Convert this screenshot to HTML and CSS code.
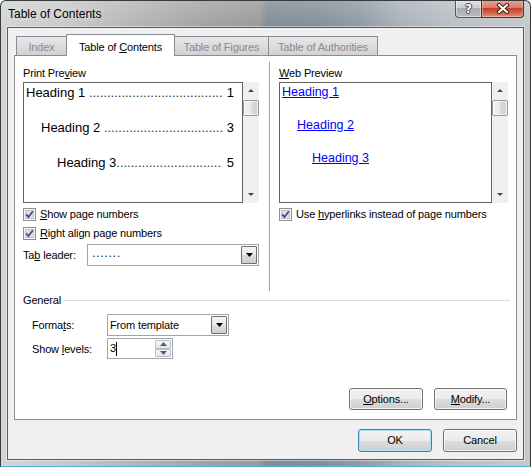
FILE: index.html
```html
<!DOCTYPE html>
<html>
<head>
<meta charset="utf-8">
<title>Table of Contents</title>
<link rel="stylesheet" href="styles.css">
</head>
<body>
<div class="window">
  <div class="titlebar">
    <div class="title">Table of Contents</div>
    <div class="caption">
      <div class="cap-btn cap-help"><span class="help-glyph">?</span></div>
      <div class="cap-btn cap-close">
        <svg width="14" height="11" viewBox="0 0 14 11">
          <path d="M3 2 L11 9 M11 2 L3 9" stroke="#4a1c14" stroke-width="4.2" stroke-linecap="round"/>
          <path d="M3 2 L11 9 M11 2 L3 9" stroke="#ffffff" stroke-width="2.2" stroke-linecap="round"/>
        </svg>
      </div>
    </div>
  </div>
  <div class="client">
    <div class="tabs">
      <div class="tab tab-index"><span>Index</span></div>
      <div class="tab tab-active"><span>Table of <u>C</u>ontents</span></div>
      <div class="tab tab-figures"><span>Table of Figures</span></div>
      <div class="tab tab-auth"><span>Table of Authorities</span></div>
    </div>
    <div class="panel">
      <div class="columns">
        <div class="col col-left">
          <div class="lbl">Print Pre<u>v</u>iew</div>
          <div class="preview-row">
            <div class="pbox pbox-print">
              <div class="toc-line"><span class="toc-name">Heading 1 <span class="toc-dots">.....................................</span></span><span class="toc-num">1</span></div>
              <div class="toc-line toc-l2"><span class="toc-name">Heading 2 <span class="toc-dots">.................................</span></span><span class="toc-num">3</span></div>
              <div class="toc-line toc-l3"><span class="toc-name">Heading 3<span class="toc-dots">.............................</span></span><span class="toc-num">5</span></div>
            </div>
            <div class="vscroll">
              <div class="sb-arrow"><span class="tri-up"></span></div>
              <div class="sb-thumb"></div>
              <div class="sb-fill"></div>
              <div class="sb-arrow"><span class="tri-down"></span></div>
            </div>
          </div>
          <div class="check check-first">
            <svg class="cb" width="13" height="13" viewBox="0 0 13 13"><rect x="0.5" y="0.5" width="12" height="12" fill="#f6f6f6" stroke="#8e8f8f"/><rect x="2.5" y="2.5" width="8" height="8" fill="#dfe1e4" stroke="#c3c6cb"/><path d="M3.2 6.4 L5.4 9 L9.9 3.3" fill="none" stroke="#41538a" stroke-width="1.8"/></svg>
            <span><u>S</u>how page numbers</span>
          </div>
          <div class="check check-next">
            <svg class="cb" width="13" height="13" viewBox="0 0 13 13"><rect x="0.5" y="0.5" width="12" height="12" fill="#f6f6f6" stroke="#8e8f8f"/><rect x="2.5" y="2.5" width="8" height="8" fill="#dfe1e4" stroke="#c3c6cb"/><path d="M3.2 6.4 L5.4 9 L9.9 3.3" fill="none" stroke="#41538a" stroke-width="1.8"/></svg>
            <span><u>R</u>ight align page numbers</span>
          </div>
          <div class="leader-row">
            <span class="leader-lbl">Ta<u>b</u> leader:</span>
            <div class="combo combo-leader">
              <span class="combo-text leader-dots">.......</span>
              <div class="combo-btn"><svg width="7" height="4" viewBox="0 0 7 4"><path d="M0 0 H7 L3.5 4 Z" fill="#000"/></svg></div>
            </div>
          </div>
        </div>
        <div class="vsep"></div>
        <div class="col col-right">
          <div class="lbl"><u>W</u>eb Preview</div>
          <div class="preview-row">
            <div class="pbox pbox-web">
              <div class="web-line"><span class="link">Heading 1</span></div>
              <div class="web-line web-l2"><span class="link">Heading 2</span></div>
              <div class="web-line web-l3"><span class="link">Heading 3</span></div>
            </div>
            <div class="vscroll">
              <div class="sb-arrow"><span class="tri-up"></span></div>
              <div class="sb-thumb"></div>
              <div class="sb-fill"></div>
              <div class="sb-arrow"><span class="tri-down"></span></div>
            </div>
          </div>
          <div class="check check-first">
            <svg class="cb" width="13" height="13" viewBox="0 0 13 13"><rect x="0.5" y="0.5" width="12" height="12" fill="#f6f6f6" stroke="#8e8f8f"/><rect x="2.5" y="2.5" width="8" height="8" fill="#dfe1e4" stroke="#c3c6cb"/><path d="M3.2 6.4 L5.4 9 L9.9 3.3" fill="none" stroke="#41538a" stroke-width="1.8"/></svg>
            <span>Use <u>h</u>yperlinks instead of page numbers</span>
          </div>
        </div>
      </div>
      <div class="gen-head">
        <span>General</span>
        <div class="gen-line"></div>
      </div>
      <div class="form-row form-first">
        <span class="form-lbl">Forma<u>t</u>s:</span>
        <div class="combo combo-formats">
          <span class="combo-text">From template</span>
          <div class="combo-btn"><svg width="7" height="4" viewBox="0 0 7 4"><path d="M0 0 H7 L3.5 4 Z" fill="#000"/></svg></div>
        </div>
      </div>
      <div class="form-row form-next">
        <span class="form-lbl">Show <u>l</u>evels:</span>
        <div class="spin">
          <span class="spin-text">3</span><span class="caret"></span>
          <div class="spin-btns">
            <div class="spin-btn"><svg width="7" height="4" viewBox="0 0 7 4"><path d="M0 4 H7 L3.5 0 Z" fill="#4c6283"/></svg></div>
            <div class="spin-btn"><svg width="7" height="4" viewBox="0 0 7 4"><path d="M0 0 H7 L3.5 4 Z" fill="#4c6283"/></svg></div>
          </div>
        </div>
      </div>
      <div class="panel-btns">
        <div class="btn btn-small btn-options"><span><u>O</u>ptions...</span></div>
        <div class="btn btn-small btn-modify"><span><u>M</u>odify...</span></div>
      </div>
    </div>
    <div class="dlg-btns">
      <div class="btn btn-default"><span>OK</span></div>
      <div class="btn"><span>Cancel</span></div>
    </div>
  </div>
</div>
</body>
</html>
```
FILE: styles.css
```css
html, body {
  margin: 0;
  padding: 0;
  background: #ffffff;
}

body {
  font-family: "Liberation Sans", Arial, sans-serif;
  font-size: 11px;
  letter-spacing: -0.15px;
  color: #000;
}

.window {
  width: 531px;
  height: 467px;
  box-sizing: border-box;
  border: 1px solid #3a3a3a;
  border-bottom-color: #52b6d6;
  border-radius: 6px 6px 0 0;
  overflow: hidden;
  display: flex;
  flex-direction: column;
  background:
    linear-gradient(to bottom, rgba(255,255,255,0.18) 0px, rgba(255,255,255,0) 26px),
    linear-gradient(to right, #d3d4d5 0px, #c6c7c7 70px, #b2b3b3 140px, #a1a2a0 210px, #9a9b99 258px, #808c96 266px, #83909a 320px, #909ba4 360px, #a9b1b9 400px, #b9bfc6 450px, #c4c9ce 531px);
}

.titlebar {
  height: 26px;
  display: flex;
  align-items: flex-start;
  padding: 0 6px 0 7px;
  flex: none;
}

.title {
  flex: 1;
  line-height: 26px;
  font-size: 12px;
  letter-spacing: 0;
  color: #000;
  text-shadow: 0 0 6px rgba(255,255,255,0.7);
}

.caption {
  display: flex;
  height: 18px;
  margin-top: -1px;
}

.cap-btn {
  box-sizing: border-box;
  height: 18px;
  display: flex;
  align-items: center;
  justify-content: center;
  border: 1px solid #54585e;
  border-top: none;
}

.cap-help {
  width: 26px;
  border-radius: 0 0 0 4px;
  border-right: none;
  background: linear-gradient(to bottom, #e6e8ea 0%, #c9ccd0 45%, #a9adb3 50%, #b9bdc2 100%);
  box-shadow: inset 0 0 0 1px rgba(255,255,255,0.45);
}

.help-glyph {
  font-family: "DejaVu Sans", sans-serif;
  font-weight: bold;
  font-size: 12px;
  line-height: 16px;
  color: #fff;
  text-shadow: 1px 0 0 #444, -1px 0 0 #444, 0 1px 0 #444, 0 -1px 0 #444;
}

.cap-close {
  width: 43px;
  border-radius: 0 0 4px 0;
  border-color: #5d2a22;
  background: linear-gradient(to bottom, #e9a897 0%, #d97a66 45%, #c43f29 50%, #d3735b 85%, #e0a080 100%);
  box-shadow: inset 0 0 0 1px rgba(255,220,210,0.4);
}

.client {
  flex: 1;
  margin: 0 6px 6px 6px;
  border: 1px solid #5a5a5a;
  box-shadow: 0 0 0 1px rgba(255,255,255,0.45);
  background: #f0f0f0;
  padding: 6px 6px 0 6px;
  display: flex;
  flex-direction: column;
}

.tabs {
  display: flex;
  align-items: flex-end;
  height: 22px;
  margin-bottom: -1px;
  padding-left: 2px;
  position: relative;
  z-index: 1;
}

.tab {
  box-sizing: border-box;
  height: 19px;
  margin-bottom: 1px;
  border: 1px solid #898c95;
  border-bottom: none;
  margin-right: -1px;
  background: linear-gradient(to bottom, #e8e8e8 0%, #dcdcdc 50%, #d2d2d2 100%);
  color: #8a8a8a;
  display: flex;
  align-items: center;
  justify-content: center;
  line-height: 13px;
  padding-top: 3px;
  white-space: nowrap;
}

.tab-index { width: 51px; }
.tab-figures { width: 95px; }
.tab-auth { width: 110px; }

.tab-active {
  width: 109px;
  height: 22px;
  margin-bottom: 0;
  background: #ffffff;
  color: #000;
  position: relative;
  z-index: 2;
  padding-top: 3px;
}

.panel {
  box-sizing: border-box;
  height: 365px;
  border: 1px solid #898c95;
  background: #ffffff;
  display: flex;
  flex-direction: column;
}

.columns {
  display: flex;
  padding: 6px 7px 0 8px;
}

.col-left { width: 236px; }
.col-right { width: 229px; }

.vsep {
  width: 1px;
  height: 229px;
  background: #a0a0a0;
  margin: 0 9px 0 10px;
}

.lbl {
  margin-top: 5px;
  line-height: 13px;
  height: 13px;
  margin-bottom: 2px;
}

.preview-row {
  display: flex;
  height: 121px;
}

.pbox {
  box-sizing: border-box;
  border: 1px solid #646464;
  background: #fff;
  overflow: hidden;
}

.pbox-print {
  width: 220px;
  padding: 2px 8px 0 2px;
  font-size: 13px;
  letter-spacing: 0;
}

.pbox-web {
  width: 213px;
  padding: 1px 4px 0 2px;
  font-size: 12.5px;
  letter-spacing: 0;
}

.toc-line {
  display: flex;
  justify-content: space-between;
  line-height: 16px;
  white-space: nowrap;
}

.toc-l2 { margin-top: 19px; padding-left: 15px; }
.toc-l3 { margin-top: 19px; padding-left: 31px; }

.toc-dots {
  color: #1b3444;
}

.web-line {
  line-height: 16px;
  white-space: nowrap;
}

.web-l2 { margin-top: 17px; padding-left: 15px; }
.web-l3 { margin-top: 17px; padding-left: 30px; }

.link {
  color: #0000ff;
  text-decoration: underline;
}

.vscroll {
  width: 16px;
  background: #f0f0f0;
  display: flex;
  flex-direction: column;
}

.sb-arrow {
  height: 17px;
  display: flex;
  align-items: center;
  justify-content: center;
}

.tri-up {
  width: 0;
  height: 0;
  border-left: 3px solid transparent;
  border-right: 3px solid transparent;
  border-bottom: 3px solid #4a4a4a;
}

.tri-down {
  width: 0;
  height: 0;
  border-left: 3px solid transparent;
  border-right: 3px solid transparent;
  border-top: 3px solid #4a4a4a;
}

.sb-thumb {
  box-sizing: border-box;
  height: 16px;
  margin-top: 1px;
  border: 1px solid #979797;
  border-radius: 2px;
  background: linear-gradient(to right, #f4f4f4 0%, #e8e8e8 50%, #d9d9d9 55%, #d2d2d2 100%);
  box-shadow: inset 0 0 0 1px rgba(255,255,255,0.7);
}

.sb-fill { flex: 1; }

.check {
  display: flex;
  align-items: center;
  height: 13px;
  line-height: 13px;
}

.check-first { margin-top: 5px; }
.check-next { margin-top: 6px; }

.cb {
  flex: none;
  margin-right: 4px;
}

.leader-row {
  display: flex;
  align-items: center;
  margin-top: 4px;
}

.leader-lbl { width: 64px; }

.combo {
  box-sizing: border-box;
  height: 22px;
  border: 1px solid #a4a4a4;
  background: #fff;
  display: flex;
  align-items: center;
}

.combo-leader { width: 172px; }
.combo-formats { width: 122px; }

.combo-text {
  flex: 1;
  padding-left: 2px;
  line-height: 13px;
}

.leader-dots {
  padding-left: 4px;
  font-size: 13px;
  letter-spacing: 0.5px;
  color: #2a1c5c;
  line-height: 14px;
  margin-top: -4px;
}

.combo-btn {
  box-sizing: border-box;
  width: 16px;
  height: 18px;
  margin-right: 1px;
  border: 1px solid #707070;
  border-radius: 1px;
  background: linear-gradient(to bottom, #f2f2f2 0%, #ebebeb 50%, #dddddd 50%, #cfcfcf 100%);
  display: flex;
  align-items: center;
  justify-content: center;
}

.gen-head {
  display: flex;
  align-items: center;
  margin-top: 3px;
  height: 13px;
  line-height: 13px;
  padding: 0 6px 0 8px;
}

.gen-line {
  flex: 1;
  height: 1px;
  margin-left: 3px;
  background: #d5dfe5;
}

.form-row {
  display: flex;
  align-items: center;
  padding-left: 17px;
}

.form-first { margin-top: 7px; }
.form-next { margin-top: 2px; }

.form-lbl { width: 75px; }

.spin {
  box-sizing: border-box;
  width: 66px;
  height: 21px;
  border: 1px solid #a4a4a4;
  background: #fff;
  display: flex;
  align-items: center;
}

.spin-text {
  padding-left: 2px;
  line-height: 13px;
}

.caret {
  width: 1px;
  height: 14px;
  background: #000;
}

.spin-btns {
  margin-left: auto;
  margin-right: 1px;
  width: 16px;
  height: 17px;
  display: flex;
  flex-direction: column;
}

.spin-btn {
  box-sizing: border-box;
  flex: 1;
  border: 1px solid #b8bfc9;
  border-radius: 1px;
  background: linear-gradient(to bottom, #f6f7f8 0%, #e4e7ea 100%);
  display: flex;
  align-items: center;
  justify-content: center;
}

.panel-btns {
  margin-top: auto;
  display: flex;
  justify-content: flex-end;
  gap: 11px;
  padding: 0 9px 9px 0;
}

.btn {
  box-sizing: border-box;
  width: 74px;
  height: 23px;
  border: 1px solid #707070;
  border-radius: 3px;
  background: linear-gradient(to bottom, #f2f2f2 0%, #ebebeb 50%, #dddddd 50%, #cfcfcf 100%);
  box-shadow: inset 0 0 0 1px rgba(255,255,255,0.75);
  display: flex;
  align-items: center;
  justify-content: center;
  line-height: 13px;
}

.btn-small { height: 22px; }
.btn-modify { width: 73px; }

.btn-default {
  border-color: #3c7fb1;
  box-shadow: inset 0 0 0 1px #aee3fa;
}

.dlg-btns {
  display: flex;
  justify-content: flex-end;
  gap: 11px;
  margin-top: 9px;
}
```
